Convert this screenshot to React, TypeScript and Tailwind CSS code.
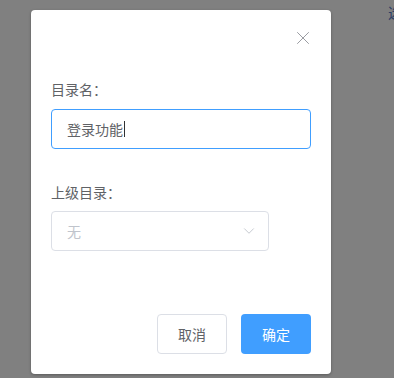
import React from 'react';
import { X, ChevronDown } from 'lucide-react';

export default function App() {
  return (
    <div
      className="relative w-[394px] h-[378px] overflow-hidden bg-[#808080]"
      style={{ fontFamily: '"Noto Sans CJK SC", "Liberation Sans", sans-serif' }}
    >
      {/* 背景里露出的文字 */}
      <span className="absolute left-[388px] top-[2px] text-[14px] leading-[20px] text-[#2c3e66]">选</span>

      <div className="absolute left-[31px] top-[10px] w-[300px] h-[364px] bg-white rounded-[4px] shadow-[0_1px_3px_rgba(0,0,0,0.3)] flex flex-col">
        <div className="flex justify-end pt-[17px] pr-[17px]">
          <X className="w-[22px] h-[22px] text-[#909399]" strokeWidth={1} />
        </div>

        <div className="px-[20px] pt-[30px] flex flex-col">
          <label className="text-[14px] leading-[20px] text-[#606266]">目录名：</label>
          <div className="mt-[10px] h-[40px] w-[260px] rounded-[4px] border border-[#409eff] flex items-center px-[15px]">
            <span className="text-[14px] text-[#606266]">登录功能</span>
            <span className="ml-px w-px h-[16px] bg-[#303133]"></span>
          </div>

          <label className="mt-[33px] text-[14px] leading-[20px] text-[#606266]">上级目录：</label>
          <div className="mt-[9px] h-[40px] w-[218px] rounded-[4px] border border-[#dcdfe6] flex items-center justify-between pl-[15px] pr-[10px]">
            <span className="text-[14px] text-[#c0c4cc]">无</span>
            <ChevronDown className="w-[18px] h-[18px] text-[#c0c4cc]" strokeWidth={1.2} />
          </div>
        </div>

        <div className="mt-auto mb-[20px] px-[20px] flex justify-end gap-[14px]">
          <button className="w-[70px] h-[40px] rounded-[4px] border border-[#dcdfe6] bg-white text-[14px] text-[#606266]">取消</button>
          <button className="w-[70px] h-[40px] rounded-[4px] bg-[#409eff] text-[14px] text-white">确定</button>
        </div>
      </div>
    </div>
  );
}
